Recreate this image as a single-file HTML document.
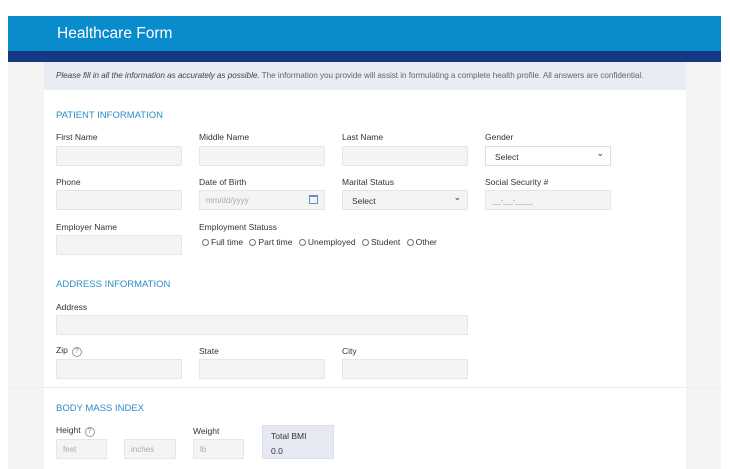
<!DOCTYPE html>
<html><head><style>
*{margin:0;padding:0;box-sizing:border-box}
body{width:730px;height:469px;background:#fff;font-family:"Liberation Sans",sans-serif;position:relative;overflow:hidden}
.a{position:absolute}
.lbl{position:absolute;font-size:8.5px;color:#333}
.in{position:absolute;background:#f4f4f4;border:1px solid #e6e6e6;height:20px;font-size:8px;color:#aaa;padding:5px 0 0 6px}
.sel{position:absolute;background:#fff;border:1px solid #ddd;height:20px;font-size:8.5px;color:#333;padding:5px 0 0 9px}
.sel:after{content:"⌄";position:absolute;right:6px;top:1px;font-size:9px}
.h{position:absolute;font-size:9.5px;color:#2a8ec6}
.r{display:inline-block;width:7px;height:7px;border:1px solid #777;border-radius:50%;margin:0 2px 0 4px;vertical-align:-1px}
.q{display:inline-block;width:10px;height:10px;border:1px solid #999;border-radius:50%;font-size:7px;text-align:center;line-height:8px;color:#888;margin-left:4px}
</style></head><body>
<div class="a" style="left:8px;top:16px;width:713px;height:453px;background:#f4f4f4"></div>
<div class="a" style="left:8px;top:16px;width:713px;height:35px;background:#0a8ccc"></div>
<div class="a" style="left:8px;top:51px;width:713px;height:11px;background:#153a83"></div>
<div class="a" style="left:57px;top:25px;font-size:15.5px;color:#fff">Healthcare Form</div>
<div class="a" style="left:44px;top:62px;width:642px;height:28px;background:#e9ecf3"></div>
<div class="a" style="left:44px;top:90px;width:642px;height:379px;background:#fff"></div>
<div class="a" style="left:56px;top:71px;font-size:8.2px;color:#666;white-space:nowrap;letter-spacing:-0.05px"><i style="color:#444">Please fill in all the information as accurately as possible.</i> The information you provide will assist in formulating a complete health profile. All answers are confidential.</div>
<div class="a" style="left:8px;top:387px;width:713px;height:1px;background:#eee"></div>
<div class="h" style="left:56px;top:110px">PATIENT INFORMATION</div>
<div class="lbl" style="left:56px;top:132px">First Name</div>
<div class="lbl" style="left:199px;top:132px">Middle Name</div>
<div class="lbl" style="left:342px;top:132px">Last Name</div>
<div class="lbl" style="left:485px;top:132px">Gender</div>
<div class="in" style="left:56px;top:146px;width:126px"></div>
<div class="in" style="left:199px;top:146px;width:126px"></div>
<div class="in" style="left:342px;top:146px;width:126px"></div>
<div class="sel" style="left:485px;top:146px;width:126px">Select</div>
<div class="lbl" style="left:56px;top:177px">Phone</div>
<div class="lbl" style="left:199px;top:177px">Date of Birth</div>
<div class="lbl" style="left:342px;top:177px">Marital Status</div>
<div class="lbl" style="left:485px;top:177px">Social Security #</div>
<div class="in" style="left:56px;top:190px;width:126px"></div>
<div class="in" style="left:199px;top:190px;width:126px">mm/dd/yyyy<span style="position:absolute;right:6px;top:4px;width:9px;height:9px;border:1px solid #6a8fb8;border-top-width:2px"></span></div>
<div class="sel" style="left:342px;top:190px;width:126px;background:#f4f4f4;border-color:#e6e6e6">Select</div>
<div class="in" style="left:485px;top:190px;width:126px">__-__-____</div>
<div class="lbl" style="left:56px;top:222px">Employer Name</div>
<div class="lbl" style="left:199px;top:222px">Employment Statuss</div>
<div class="in" style="left:56px;top:235px;width:126px"></div>
<div class="lbl" style="left:198px;top:237px;white-space:nowrap"><span class="r"></span>Full time <span class="r"></span>Part time <span class="r"></span>Unemployed <span class="r"></span>Student <span class="r"></span>Other</div>
<div class="h" style="left:56px;top:279px">ADDRESS INFORMATION</div>
<div class="lbl" style="left:56px;top:302px">Address</div>
<div class="in" style="left:56px;top:315px;width:412px"></div>
<div class="lbl" style="left:56px;top:345px">Zip<span class="q">?</span></div>
<div class="lbl" style="left:199px;top:346px">State</div>
<div class="lbl" style="left:342px;top:346px">City</div>
<div class="in" style="left:56px;top:359px;width:126px"></div>
<div class="in" style="left:199px;top:359px;width:126px"></div>
<div class="in" style="left:342px;top:359px;width:126px"></div>
<div class="h" style="left:56px;top:403px">BODY MASS INDEX</div>
<div class="lbl" style="left:56px;top:425px">Height<span class="q">?</span></div>
<div class="lbl" style="left:193px;top:426px">Weight</div>
<div class="in" style="left:56px;top:439px;width:51px">feet</div>
<div class="in" style="left:124px;top:439px;width:52px">inches</div>
<div class="in" style="left:193px;top:439px;width:51px">lb</div>
<div class="a" style="left:262px;top:425px;width:72px;height:34px;background:#e6e9f2;border:1px solid #dde"></div>
<div class="lbl" style="left:271px;top:431px">Total BMI</div>
<div class="lbl" style="left:271px;top:446px">0.0</div>
</body></html>
